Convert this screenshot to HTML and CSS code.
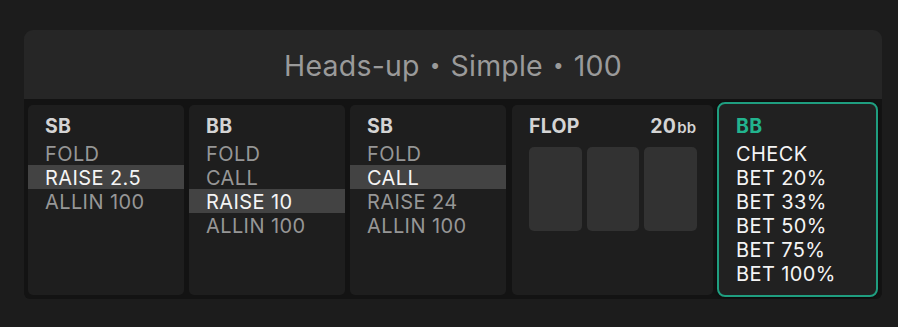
FILE: index.html
```html
<!DOCTYPE html>
<html>
<head>
<meta charset="utf-8">
<link rel="stylesheet" href="styles.css">
</head>
<body>
<div class="panel">
  <div class="title">Heads-up <span class="dot">•</span> Simple <span class="dot">•</span> 100</div>
  <div class="strip">
    <div class="col w156">
      <div class="head">SB</div>
      <div class="row">FOLD</div>
      <div class="row sel">RAISE 2.5</div>
      <div class="row">ALLIN 100</div>
    </div>
    <div class="col w156">
      <div class="head">BB</div>
      <div class="row">FOLD</div>
      <div class="row">CALL</div>
      <div class="row sel">RAISE 10</div>
      <div class="row">ALLIN 100</div>
    </div>
    <div class="col w156">
      <div class="head">SB</div>
      <div class="row">FOLD</div>
      <div class="row sel">CALL</div>
      <div class="row">RAISE 24</div>
      <div class="row">ALLIN 100</div>
    </div>
    <div class="col flop">
      <div class="head split"><span>FLOP</span><span>20<small>bb</small></span></div>
      <div class="cards">
        <div class="card"></div>
        <div class="card"></div>
        <div class="card"></div>
      </div>
    </div>
    <div class="col active">
      <div class="head green">BB</div>
      <div class="row lit">CHECK</div>
      <div class="row lit">BET 20%</div>
      <div class="row lit">BET 33%</div>
      <div class="row lit">BET 50%</div>
      <div class="row lit">BET 75%</div>
      <div class="row lit">BET 100%</div>
    </div>
  </div>
</div>
</body>
</html>
```
FILE: styles.css
```css
html, body {
  margin: 0;
  padding: 0;
  background: #1c1c1c;
  font-family: Inter, "Noto Sans", sans-serif;
}
.panel {
  margin: 30px 0 0 24px;
  width: 858px;
  border-radius: 9px 9px 6px 6px;
  overflow: hidden;
}
.title {
  height: 69px;
  background: #262626;
  display: flex;
  align-items: center;
  justify-content: center;
  color: #9a9a9a;
  font-size: 28.5px;
  letter-spacing: 0.2px;
  padding-top: 2px;
  box-sizing: border-box;
}
.dot {
  font-size: 19px;
  margin: 0 10px;
}
.strip {
  background: #131313;
  height: 200px;
  box-sizing: border-box;
  padding: 6px 4px 4px 4px;
  display: flex;
  gap: 5px;
}
.col {
  background: #1e1e1e;
  border-radius: 5px;
  padding-top: 9px;
  box-sizing: border-box;
}
.w156 { width: 156px; }
.flop { width: 201px; margin-left: 1px; }
.head {
  height: 24px;
  line-height: 24px;
  padding: 0 17px;
  font-size: 19.5px;
  font-weight: 700;
  letter-spacing: 0.3px;
  color: #d4d4d4;
  margin-bottom: 3px;
}
.split {
  display: flex;
  justify-content: space-between;
}
.split small {
  font-size: 15px;
  font-weight: 600;
  margin-left: 1px;
  letter-spacing: 0;
}
.row {
  height: 24px;
  line-height: 26px;
  padding: 0 17px;
  font-size: 20px;
  letter-spacing: 0.4px;
  color: #969696;
  white-space: nowrap;
}
.row.sel {
  background: #434343;
  color: #f4f4f4;
}
.cards {
  display: flex;
  gap: 5px;
  padding: 6px 16px 0 17px;
}
.card {
  flex: 1;
  height: 84px;
  background: #323232;
  border-radius: 5px;
}
.active {
  width: 161px;
  margin: -3px 0 -2px -1px;
  border: 2px solid #1f9e80;
  border-radius: 8px;
  background: #212121;
  padding-top: 10px;
  box-shadow: 0 0 3px rgba(0,0,0,0.6);
}
.green { color: #22b48e; }
.row.lit { color: #f4f4f4; }
```
